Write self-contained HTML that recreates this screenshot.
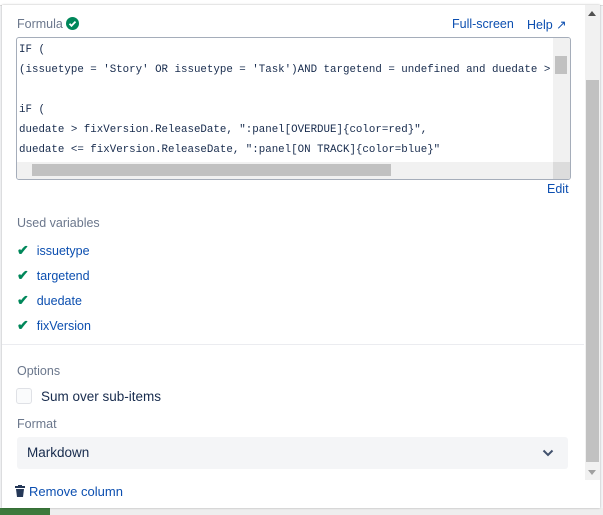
<!DOCTYPE html>
<html><head><style>
body{margin:0;width:603px;height:515px;overflow:hidden;background:#f4f5f7;font-family:"Liberation Sans",sans-serif;position:relative}
.a{position:absolute}
.panel{left:2px;top:5px;width:598px;height:503px;background:#fff;box-shadow:0 0 2px rgba(0,0,0,.3)}
.lbl{color:#6b778c;font-size:12.5px}
.link{color:#0c4fb0;font-size:12.5px}
.code{font-family:"Liberation Mono",monospace;font-size:10.8px;color:#172b4d;white-space:pre;line-height:20px}
.var{color:#0c4fb0;font-size:12.5px}
</style></head><body>
<div class="a" style="left:0;top:0;width:603px;height:5px;background:#fff;border-bottom:1px solid #ddd"></div>
<div class="a" style="left:0;top:508px;width:50px;height:7px;background:#3d7a3d"></div>
<div class="a" style="left:50px;top:508px;width:553px;height:7px;background:#eee"></div>
<div class="a panel"></div>
<div class="a" style="left:585px;top:5px;width:15px;height:475px;background:#f1f1f1"></div>
<div class="a" style="left:586px;top:80px;width:13px;height:382px;background:#c1c1c1"></div>
<div class="a" style="left:588px;top:11px;width:0;height:0;border-left:4px solid transparent;border-right:4px solid transparent;border-bottom:5px solid #505050"></div>
<div class="a" style="left:588px;top:470px;width:0;height:0;border-left:4px solid transparent;border-right:4px solid transparent;border-top:5px solid #a0a0a0"></div>

<div class="a lbl" style="left:17px;top:17px">Formula</div>
<svg class="a" style="left:66px;top:17px" width="13" height="13" viewBox="0 0 13 13"><circle cx="6.5" cy="6.5" r="6.5" fill="#00875a"/><path d="M3.5 6.8l2 2 4-4.2" stroke="#fff" stroke-width="1.8" fill="none"/></svg>
<div class="a link" style="left:452px;top:17px">Full-screen</div>
<div class="a link" style="left:527px;top:17px">Help ↗</div>

<div class="a" style="left:16px;top:37px;width:553px;height:141px;border:1px solid #a5adba;border-radius:3px;background:#fff;overflow:hidden">
 <div class="a code" style="left:2px;top:2px">IF (
(issuetype = 'Story' OR issuetype = 'Task')AND targetend = undefined and duedate &gt;

iF (
duedate &gt; fixVersion.ReleaseDate, ":panel[OVERDUE]{color=red}",
duedate &lt;= fixVersion.ReleaseDate, ":panel[ON TRACK]{color=blue}"</div>
 <div class="a" style="left:536px;top:0;width:17px;height:124px;background:#f1f1f1"></div>
 <div class="a" style="left:538px;top:18px;width:12px;height:18px;background:#c1c1c1"></div>
 <div class="a" style="left:0;top:124px;width:553px;height:17px;background:#f1f1f1"></div>
 <div class="a" style="left:15px;top:126px;width:359px;height:12px;background:#c1c1c1"></div>
 <div class="a" style="left:536px;top:124px;width:17px;height:17px;background:#dcdcdc"></div>
</div>
<div class="a link" style="left:547px;top:182px">Edit</div>

<div class="a lbl" style="left:17px;top:216px">Used variables</div>
<div class="a" style="left:17px;top:238px;line-height:24px">
<div><span style="color:#00875a;font-weight:bold;font-size:14px">✔</span><span class="var" style="margin-left:8px">issuetype</span></div>
<div><span style="color:#00875a;font-weight:bold;font-size:14px">✔</span><span class="var" style="margin-left:8px">targetend</span></div>
<div><span style="color:#00875a;font-weight:bold;font-size:14px">✔</span><span class="var" style="margin-left:8px">duedate</span></div>
<div><span style="color:#00875a;font-weight:bold;font-size:14px">✔</span><span class="var" style="margin-left:8px">fixVersion</span></div>
</div>
<div class="a" style="left:2px;top:344px;width:582px;height:1px;background:#ebecf0"></div>
<div class="a lbl" style="left:17px;top:364px">Options</div>
<div class="a" style="left:16px;top:388px;width:14px;height:14px;border:1.5px solid #dfe1e6;border-radius:3px;background:#fafbfc"></div>
<div class="a" style="left:41px;top:389px;font-size:13.5px;color:#172b4d">Sum over sub-items</div>
<div class="a lbl" style="left:17px;top:417px">Format</div>
<div class="a" style="left:17px;top:437px;width:551px;height:32px;background:#f4f5f7;border-radius:3px"></div>
<div class="a" style="left:27px;top:445px;font-size:13.5px;color:#172b4d">Markdown</div>
<svg class="a" style="left:542px;top:448px" width="12" height="10" viewBox="0 0 12 10"><path d="M1.5 2.5l4.5 4.5 4.5-4.5" stroke="#42526e" stroke-width="2" fill="none"/></svg>
<svg class="a" style="left:15px;top:485px" width="10" height="12" viewBox="0 0 10 12"><rect x="0" y="1" width="10" height="2" fill="#253858"/><rect x="3" y="0" width="4" height="2" fill="#253858"/><path d="M1 4h8l-1 8H2z" fill="#253858"/></svg>
<div class="a link" style="left:29px;top:484px;font-size:13px">Remove column</div>
</body></html>
